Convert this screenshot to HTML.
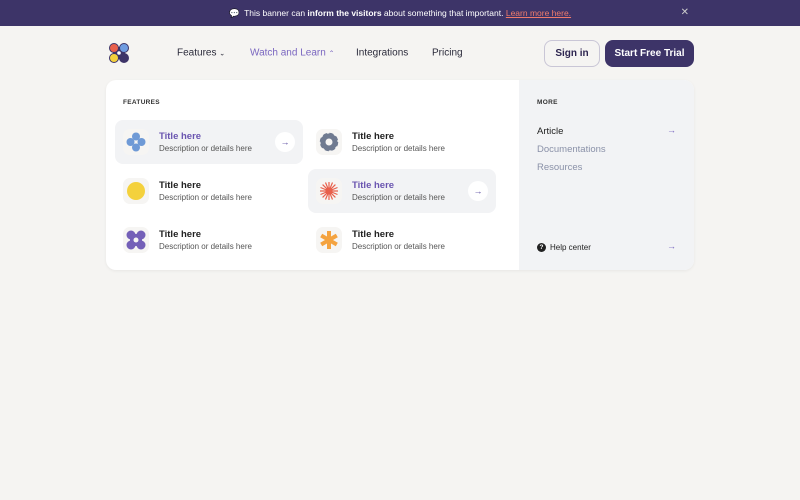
<!DOCTYPE html>
<html><head><meta charset="utf-8"><style>
*{margin:0;padding:0;box-sizing:border-box}
body{width:800px;height:500px;background:#f5f4f2;font-family:"Liberation Sans",sans-serif;position:relative;overflow:hidden}
.ban{position:absolute;top:0;left:0;width:800px;height:26px;background:#3d3468;color:#fff;font-size:8.5px;display:flex;align-items:center;justify-content:center}
.ban a{color:#f07b6b;text-decoration:underline}
.x{position:absolute;right:111px;top:7px;color:#ccc;font-size:10px}
.nav{position:absolute;top:53px;font-size:10px;color:#2a2a3a;transform:translateY(-50%)}
.btn{position:absolute;top:40px;height:27px;border-radius:8px;font-size:10px;font-weight:bold;display:flex;align-items:center;justify-content:center}
.panel{position:absolute;left:106px;top:80px;width:588px;height:190px;background:#fff;border-radius:10px;overflow:hidden;box-shadow:0 1px 3px rgba(0,0,0,.06)}
.right{position:absolute;left:413px;top:0;width:175px;height:190px;background:#f2f3f5}
.lbl{position:absolute;font-size:6.5px;font-weight:bold;color:#333;letter-spacing:.3px}
.card{position:absolute;width:188px;height:44px;border-radius:8px}
.card.h{background:#f2f3f5}
.ic{position:absolute;left:8px;top:9px;width:26px;height:26px;border-radius:7px;background:#f6f5f3;display:flex;align-items:center;justify-content:center}
.t{position:absolute;left:44px;top:11px;font-size:9.5px;font-weight:bold;color:#222}
.h .t{color:#6a55b0}
.d{position:absolute;left:44px;top:24px;font-size:8px;color:#555}
.ar{position:absolute;right:8px;top:12px;width:20px;height:20px;border-radius:50%;background:#fff;color:#5a4aa0;font-size:9px;display:flex;align-items:center;justify-content:center}
</style></head><body>
<div class="ban">💬&nbsp; This banner can&nbsp;<b>inform the visitors</b>&nbsp;about something that important.&nbsp;<a>Learn more here.</a></div>
<div class="x">✕</div>
<svg style="position:absolute;left:109px;top:43px" width="20" height="20" viewBox="0 0 20 20">
<circle cx="5" cy="5" r="5" fill="#3d3468"/><circle cx="15" cy="5" r="5" fill="#3d3468"/><circle cx="5" cy="15" r="5" fill="#3d3468"/><circle cx="15" cy="15" r="5" fill="#3d3468"/>
<rect x="4" y="4" width="12" height="12" fill="#3d3468"/>
<circle cx="5" cy="5" r="4" fill="#e8604c"/><circle cx="15" cy="5" r="4" fill="#6f9ce0"/><circle cx="5" cy="15" r="4" fill="#f4d13c"/><circle cx="10" cy="10" r="1.8" fill="#fff"/></svg>
<div class="nav" style="left:177px">Features <span style="font-size:7px">⌄</span></div>
<div class="nav" style="left:250px;color:#7a66c0">Watch and Learn <span style="font-size:7px">⌃</span></div>
<div class="nav" style="left:356px">Integrations</div>
<div class="nav" style="left:432px">Pricing</div>
<div class="btn" style="left:544px;width:56px;border:1px solid #c9c6d6;color:#2d2550">Sign in</div>
<div class="btn" style="left:605px;width:89px;background:#3d3468;color:#fff">Start Free Trial</div>
<div class="panel">
<div class="lbl" style="left:17px;top:19px">FEATURES</div>
<div class="card h" style="left:9px;top:40px"><div class="ic"><svg width="20" height="20" viewBox="0 0 20 20" fill="#6f9ad6"><circle cx="10" cy="4.5" r="4"/><circle cx="10" cy="15.5" r="4"/><circle cx="4.5" cy="10" r="4"/><circle cx="15.5" cy="10" r="4"/></svg></div><div class="t">Title here</div><div class="d">Description or details here</div><div class="ar">→</div></div>
<div class="card" style="left:202px;top:40px"><div class="ic"><svg width="20" height="20" viewBox="0 0 20 20"><circle cx="10" cy="10" r="6" fill="none" stroke="#6f7a90" stroke-width="5"/><circle cx="10" cy="10" r="8" fill="none" stroke="#6f7a90" stroke-width="2.5" stroke-dasharray="4 2.3"/></svg></div><div class="t">Title here</div><div class="d">Description or details here</div></div>
<div class="card" style="left:9px;top:89px"><div class="ic"><svg width="20" height="20"><circle cx="10" cy="10" r="9" fill="#f4d13c"/></svg></div><div class="t">Title here</div><div class="d">Description or details here</div></div>
<div class="card h" style="left:202px;top:89px"><div class="ic"><svg width="20" height="20" viewBox="0 0 20 20" stroke="#e8604c" stroke-width="1.2"><path d="M10 1V19M1 10H19M3.6 3.6L16.4 16.4M16.4 3.6L3.6 16.4M6.5 1.5L13.5 18.5M13.5 1.5L6.5 18.5M1.5 6.5L18.5 13.5M1.5 13.5L18.5 6.5"/><circle cx="10" cy="10" r="3" fill="#e8604c"/></svg></div><div class="t">Title here</div><div class="d">Description or details here</div><div class="ar">→</div></div>
<div class="card" style="left:9px;top:138px"><div class="ic"><svg width="20" height="20" viewBox="0 0 20 20" fill="#7460b8"><circle cx="5" cy="5" r="4.5"/><circle cx="15" cy="5" r="4.5"/><circle cx="5" cy="15" r="4.5"/><circle cx="15" cy="15" r="4.5"/><rect x="4" y="4" width="12" height="12"/><circle cx="10" cy="10" r="2.5" fill="#f6f5f3"/></svg></div><div class="t">Title here</div><div class="d">Description or details here</div></div>
<div class="card" style="left:202px;top:138px"><div class="ic"><svg width="20" height="20" viewBox="0 0 20 20" stroke="#f4a340" stroke-width="4"><path d="M10 1V19M2.2 5.5L17.8 14.5M2.2 14.5L17.8 5.5"/></svg></div><div class="t">Title here</div><div class="d">Description or details here</div></div>
<div class="right">
<div class="lbl" style="left:18px;top:19px">MORE</div>
<div style="position:absolute;left:18px;top:46px;font-size:9.5px;color:#222">Article</div>
<div style="position:absolute;right:18px;top:45px;font-size:9px;color:#7a66c0">→</div>
<div style="position:absolute;left:18px;top:64px;font-size:9.5px;color:#8a91a8">Documentations</div>
<div style="position:absolute;left:18px;top:82px;font-size:9.5px;color:#8a91a8">Resources</div>
<div style="position:absolute;left:18px;top:163px;width:9px;height:9px;border-radius:50%;background:#222;color:#fff;font-size:6.5px;font-weight:bold;text-align:center;line-height:9px">?</div>
<div style="position:absolute;left:31px;top:163px;font-size:8px;color:#222">Help center</div>
<div style="position:absolute;right:18px;top:161px;font-size:9px;color:#7a66c0">→</div>
</div>
</div>
</body></html>
